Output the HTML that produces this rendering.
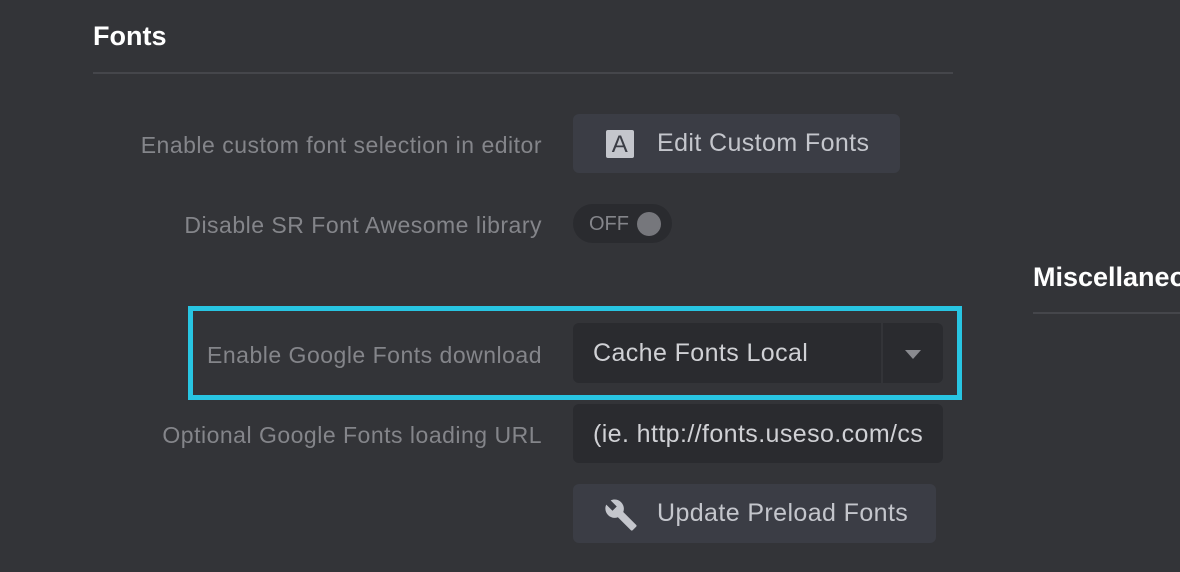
<!DOCTYPE html>
<html><head><style>
body{margin:0;width:1180px;height:572px;background:#333438;font-family:"Liberation Sans",sans-serif;position:relative;overflow:hidden}
.a{position:absolute}
.h{color:#fff;font-weight:bold;font-size:27px}
.line{height:2px;background:#45464b}
.lbl{color:#84858a;font-size:23px;letter-spacing:0.5px;right:638px;text-align:right;white-space:nowrap}
.btn{background:#3b3d45;border-radius:6px;color:#c4c6cc;font-size:25px;letter-spacing:0.4px}
.inp{background:#2a2b2f;border-radius:6px;color:#d0d1d5;font-size:25px;letter-spacing:0.4px;overflow:hidden;white-space:nowrap}
</style></head><body>
<div class="a h" style="left:93px;top:21px">Fonts</div>
<div class="a line" style="left:93px;top:72px;width:860px"></div>
<div class="a h" style="left:1033px;top:262px">Miscellaneous</div>
<div class="a line" style="left:1033px;top:312px;width:200px"></div>

<div class="a lbl" style="top:132px">Enable custom font selection in editor</div>
<div class="a btn" style="left:573px;top:114px;width:327px;height:59px">
 <div class="a" style="left:33px;top:16px;width:28px;height:28px;background:#c4c6cc;border-radius:2px;color:#3b3d45;font-size:24px;text-align:center;line-height:29px">A</div>
 <div class="a" style="left:84px;top:15px">Edit Custom Fonts</div>
</div>

<div class="a lbl" style="top:212px">Disable SR Font Awesome library</div>
<div class="a" style="left:573px;top:204px;width:99px;height:39px;background:#2a2b2f;border-radius:20px">
 <div class="a" style="left:16px;top:9px;color:#84858a;font-size:20px">OFF</div>
 <div class="a" style="left:64px;top:8px;width:24px;height:24px;border-radius:50%;background:#76777c"></div>
</div>

<div class="a" style="left:188px;top:306px;width:764px;height:84px;border:5px solid #28c5e2"></div>
<div class="a lbl" style="top:342px">Enable Google Fonts download</div>
<div class="a inp" style="left:573px;top:323px;width:370px;height:60px">
 <div class="a" style="left:20px;top:16px">Cache Fonts Local</div>
 <div class="a" style="left:308px;top:0;width:2px;height:60px;background:#333438"></div>
 <div class="a" style="left:332px;top:27px;width:0;height:0;border-left:8px solid transparent;border-right:8px solid transparent;border-top:9px solid #8a8b90"></div>
</div>

<div class="a lbl" style="top:422px">Optional Google Fonts loading URL</div>
<div class="a inp" style="left:573px;top:404px;width:370px;height:59px">
 <div class="a" style="left:20px;top:16px;width:330px;overflow:hidden">(ie. http://fonts.useso.com/css?family</div>
</div>

<div class="a btn" style="left:573px;top:484px;width:363px;height:59px">
 <svg class="a" style="left:31px;top:14px" width="34" height="34" viewBox="0 0 24 24"><path fill="#c4c6cc" d="M22.7 19l-9.1-9.1c.9-2.3.4-5-1.5-6.9-2-2-5-2.4-7.4-1.3L9 6 6 9 1.6 4.7C.4 7.1.9 10.1 2.9 12.1c1.9 1.9 4.6 2.4 6.9 1.5l9.1 9.1c.4.4 1 .4 1.4 0l2.3-2.3c.5-.4.5-1.1.1-1.4z"/></svg>
 <div class="a" style="left:84px;top:15px">Update Preload Fonts</div>
</div>
</body></html>
